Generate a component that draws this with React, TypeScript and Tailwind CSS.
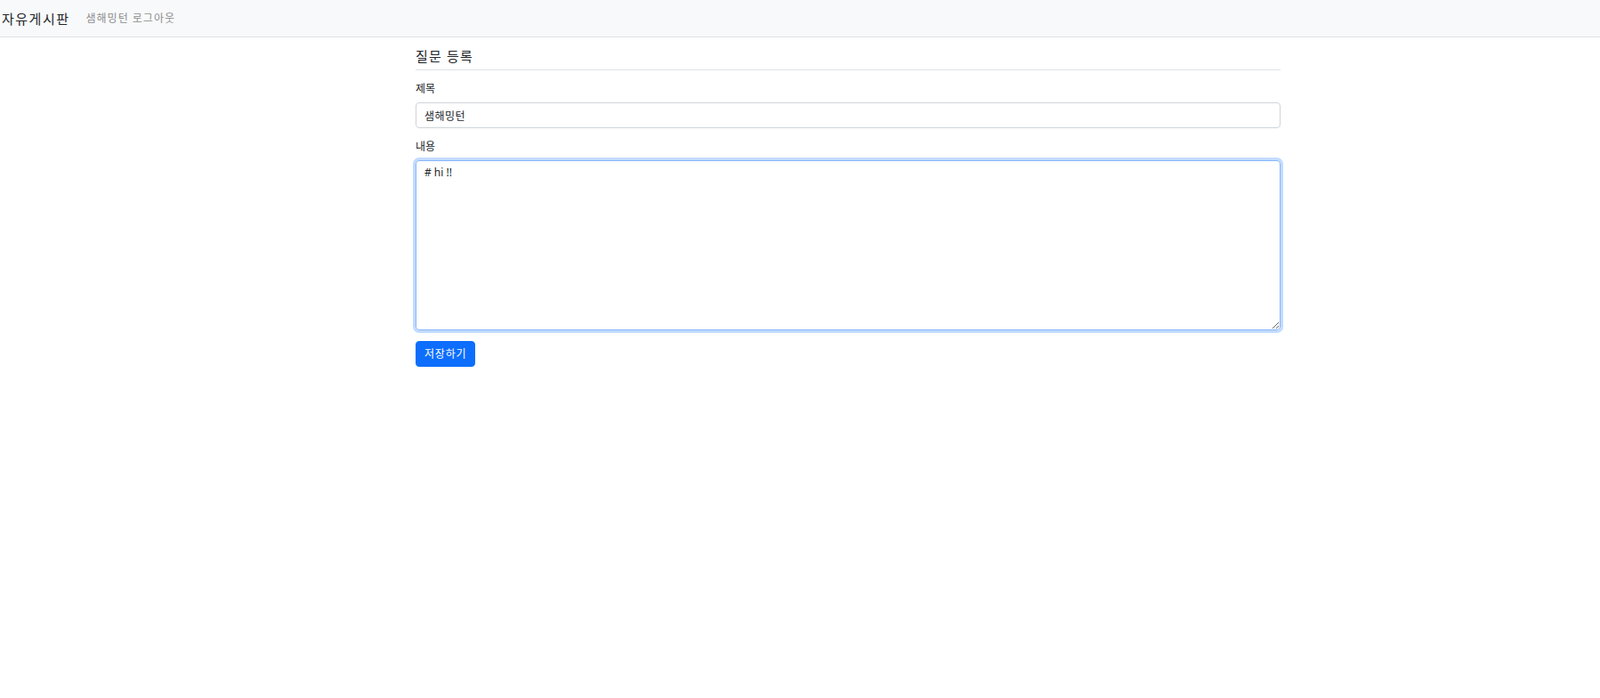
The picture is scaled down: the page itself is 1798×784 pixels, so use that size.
import React, { useEffect, useRef } from "react";

const font = "font-['Noto_Sans','Noto_Sans_CJK_KR',sans-serif]";

const App: React.FC = () => {
  const areaRef = useRef<HTMLTextAreaElement>(null);

  useEffect(() => {
    const el = areaRef.current;
    if (el) {
      el.focus();
      el.setSelectionRange(el.value.length, el.value.length);
    }
  }, []);

  return (
    <div className={`min-h-screen bg-white text-[#212529] ${font}`}>
      <nav className="flex h-[42px] items-center border-b border-[#dee2e6] bg-[#f8f9fa]">
        <a href="#" className="pl-[2px] text-[15px] leading-[22px] tracking-[1.5px] text-[#212529]">
          자유게시판
        </a>
        <a href="#" className="ml-[18px] text-[12px] leading-[18px] tracking-[1px] text-[#8c8d8e]">
          샘해밍턴 로그아웃
        </a>
      </nav>

      <div className="ml-[467px] w-[972px]">
        <h5 className="mt-[12px] border-b border-[#dee2e6] pb-[6px] text-[15px] leading-[18px] tracking-[1.2px]">
          질문 등록
        </h5>
        <form className="mt-[12px]">
          <div className="mb-[12px]">
            <label className="mb-[6px] block text-[12px] leading-[18px]">제목</label>
            <input
              type="text"
              defaultValue="샘해밍턴"
              className="block h-[29px] w-full rounded-[4px] border border-[#ced4da] px-[9px] text-[12px] leading-[18px] tracking-[0.5px] text-[#212529] outline-none"
            />
          </div>
          <div className="mb-[12px]">
            <label className="mb-[6px] block text-[12px] leading-[18px]">내용</label>
            <textarea
              ref={areaRef}
              rows={10}
              defaultValue="# hi !!"
              className="block h-[191px] w-full rounded-[4px] border border-[#86b7fe] px-[9px] py-[4px] text-[12px] leading-[18px] text-[#212529] caret-black shadow-[0_0_0_3px_rgba(13,110,253,0.25)] outline-none"
            />
          </div>
          <button
            type="button"
            className="h-[29px] rounded-[4px] border border-[#0d6efd] bg-[#0d6efd] px-[9px] text-[12px] leading-[18px] tracking-[0.8px] text-white"
          >
            저장하기
          </button>
        </form>
      </div>
    </div>
  );
};

export default App;
